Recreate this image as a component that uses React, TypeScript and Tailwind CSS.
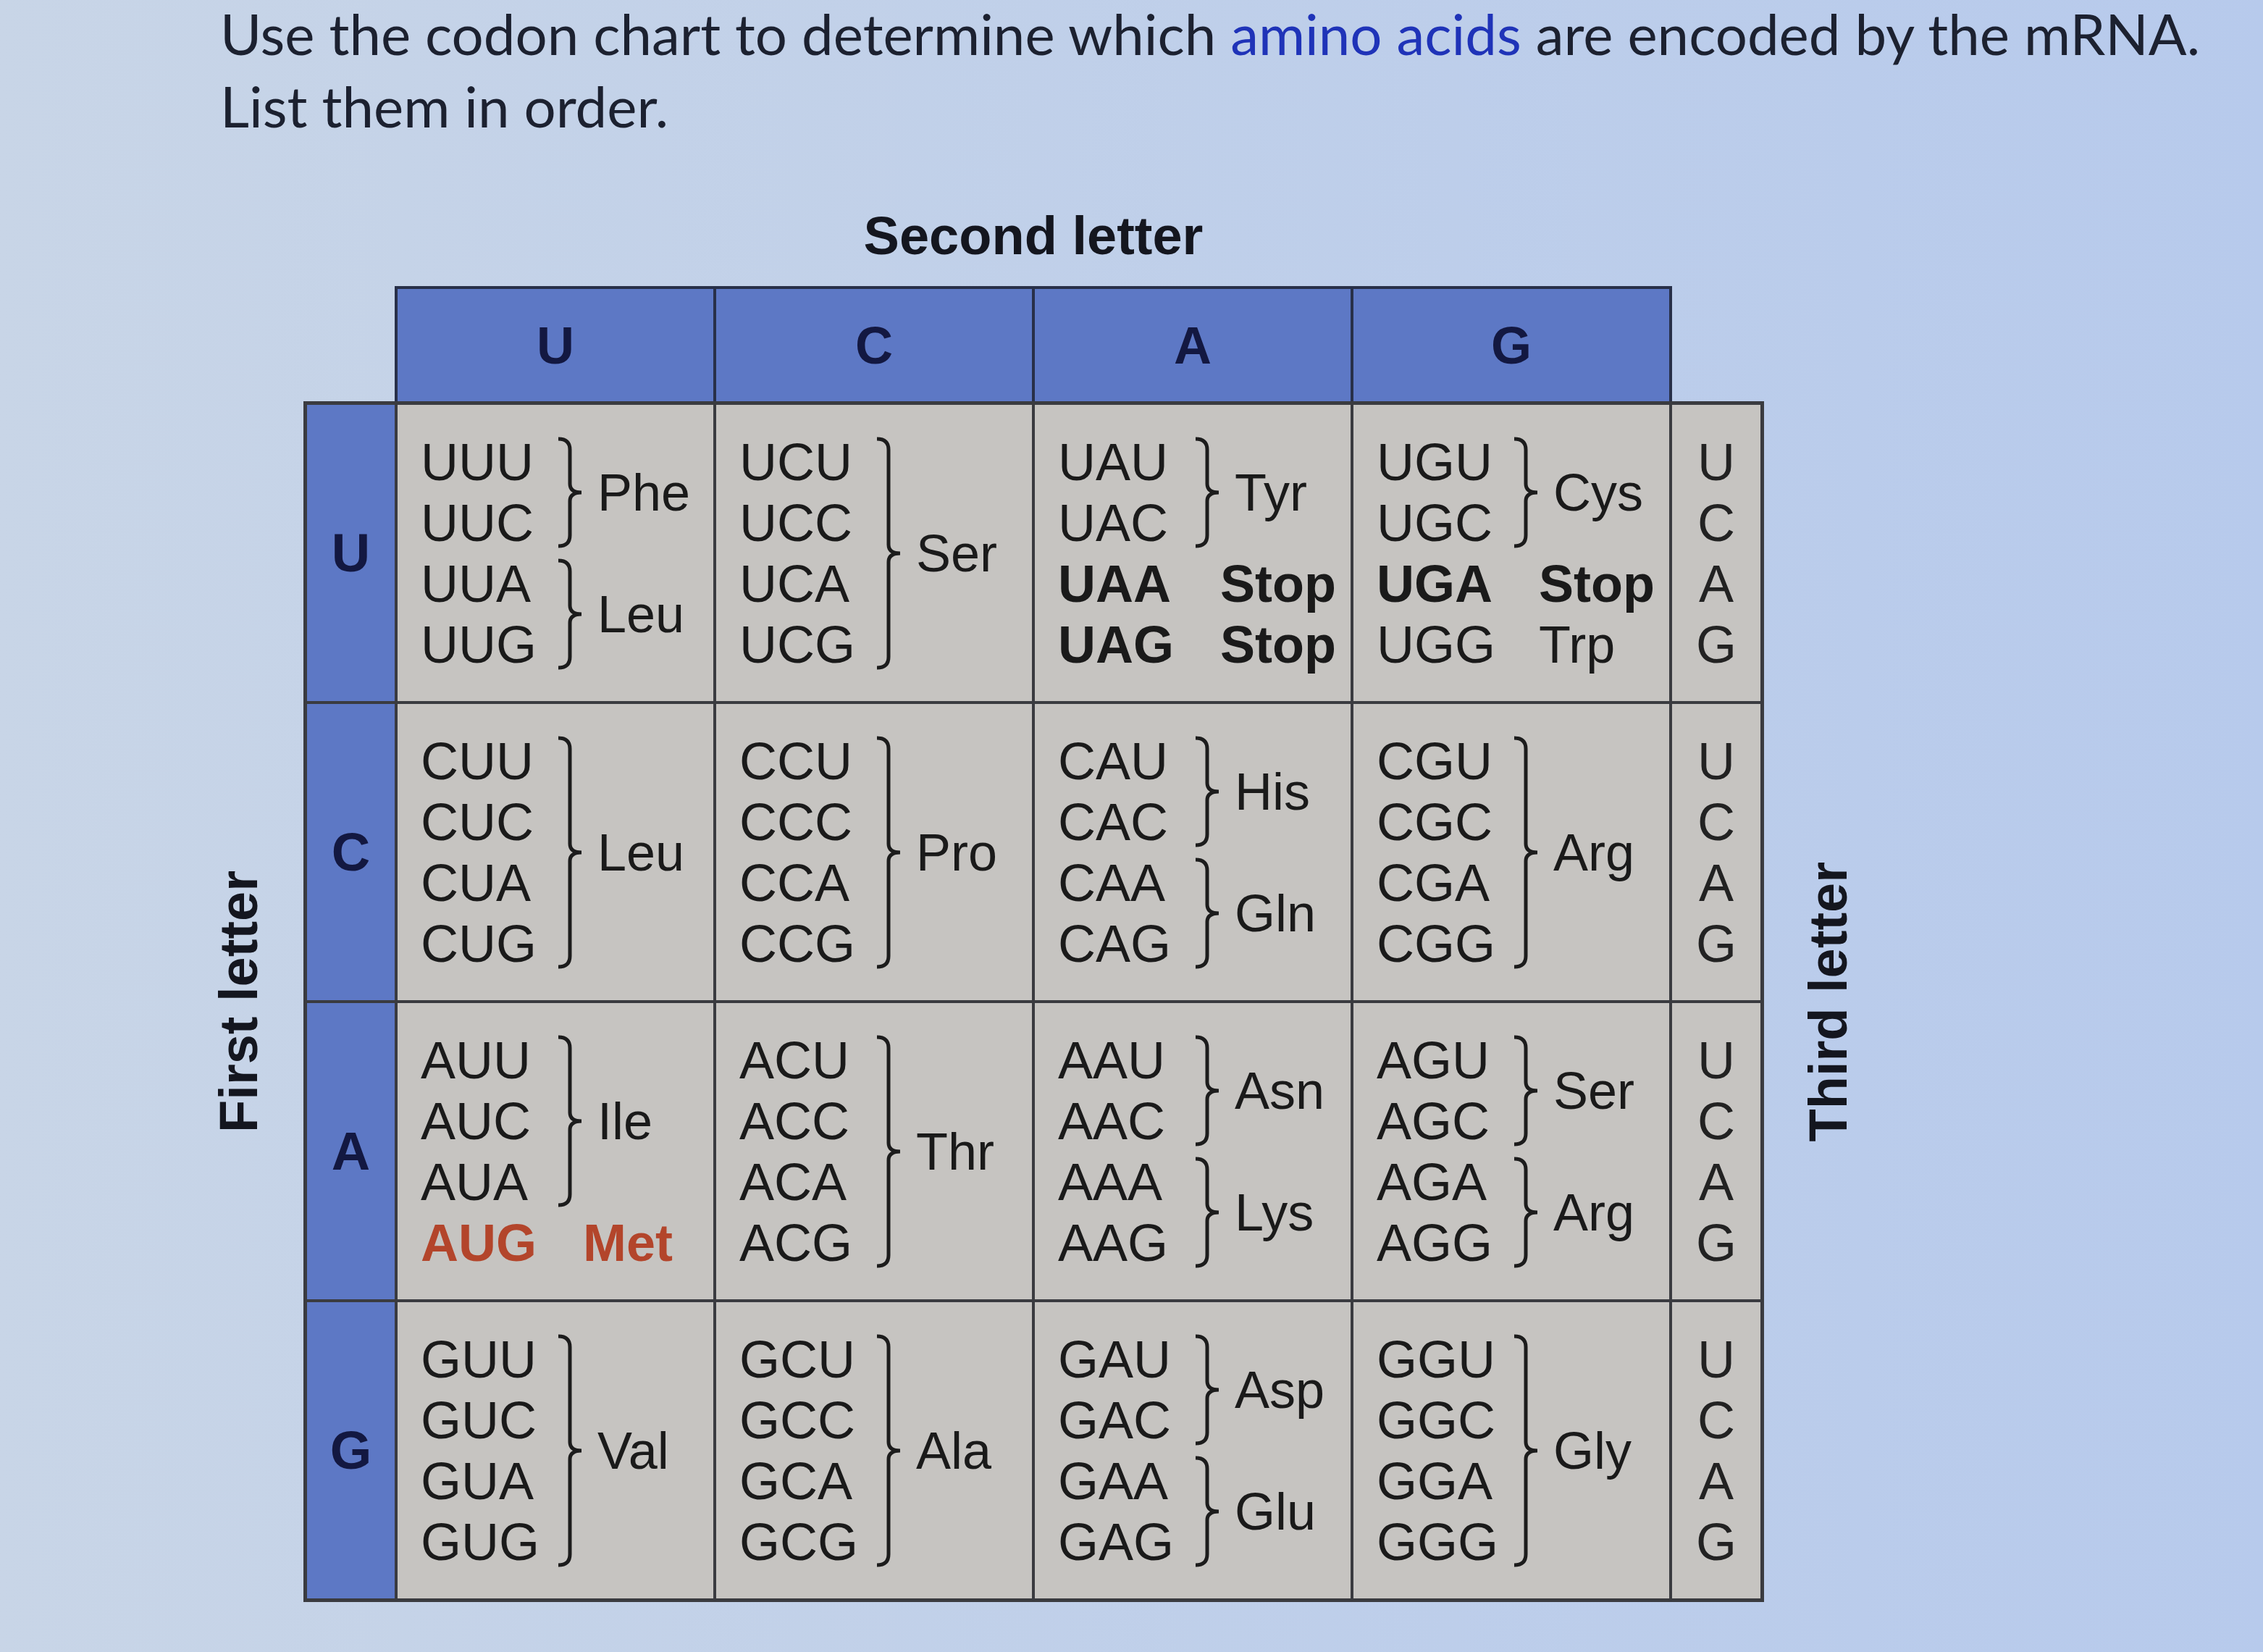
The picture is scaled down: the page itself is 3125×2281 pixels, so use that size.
import React from "react";

type Item = { codons: string[]; aa: string; kind?: "stop" | "met" };

const rows: { first: string; cells: Item[][] }[] = [
  {
    first: "U",
    cells: [
      [
        { codons: ["UUU", "UUC"], aa: "Phe" },
        { codons: ["UUA", "UUG"], aa: "Leu" },
      ],
      [{ codons: ["UCU", "UCC", "UCA", "UCG"], aa: "Ser" }],
      [
        { codons: ["UAU", "UAC"], aa: "Tyr" },
        { codons: ["UAA"], aa: "Stop", kind: "stop" },
        { codons: ["UAG"], aa: "Stop", kind: "stop" },
      ],
      [
        { codons: ["UGU", "UGC"], aa: "Cys" },
        { codons: ["UGA"], aa: "Stop", kind: "stop" },
        { codons: ["UGG"], aa: "Trp" },
      ],
    ],
  },
  {
    first: "C",
    cells: [
      [{ codons: ["CUU", "CUC", "CUA", "CUG"], aa: "Leu" }],
      [{ codons: ["CCU", "CCC", "CCA", "CCG"], aa: "Pro" }],
      [
        { codons: ["CAU", "CAC"], aa: "His" },
        { codons: ["CAA", "CAG"], aa: "Gln" },
      ],
      [{ codons: ["CGU", "CGC", "CGA", "CGG"], aa: "Arg" }],
    ],
  },
  {
    first: "A",
    cells: [
      [
        { codons: ["AUU", "AUC", "AUA"], aa: "Ile" },
        { codons: ["AUG"], aa: "Met", kind: "met" },
      ],
      [{ codons: ["ACU", "ACC", "ACA", "ACG"], aa: "Thr" }],
      [
        { codons: ["AAU", "AAC"], aa: "Asn" },
        { codons: ["AAA", "AAG"], aa: "Lys" },
      ],
      [
        { codons: ["AGU", "AGC"], aa: "Ser" },
        { codons: ["AGA", "AGG"], aa: "Arg" },
      ],
    ],
  },
  {
    first: "G",
    cells: [
      [{ codons: ["GUU", "GUC", "GUA", "GUG"], aa: "Val" }],
      [{ codons: ["GCU", "GCC", "GCA", "GCG"], aa: "Ala" }],
      [
        { codons: ["GAU", "GAC"], aa: "Asp" },
        { codons: ["GAA", "GAG"], aa: "Glu" },
      ],
      [{ codons: ["GGU", "GGC", "GGA", "GGG"], aa: "Gly" }],
    ],
  },
];

const Brace = ({ h }: { h: number }) => {
  const m = h / 2;
  return (
    <svg width={44} height={h} className="shrink-0">
      <path
        d={`M4 3 Q20 3 20 18 L20 ${m - 12} Q20 ${m} 36 ${m} Q20 ${m} 20 ${m + 12} L20 ${h - 18} Q20 ${h - 3} 4 ${h - 3}`}
        fill="none"
        stroke="#1c1c1c"
        strokeWidth={5}
      />
    </svg>
  );
};

const Entry = ({ item }: { item: Item }) => {
  const n = item.codons.length;
  const tone =
    item.kind === "met"
      ? "font-bold text-[#b3452b]"
      : item.kind === "stop"
      ? "font-bold"
      : "";
  return (
    <div className={`flex items-center ${tone}`}>
      <div className="flex w-[186px] flex-col">
        {item.codons.map((c) => (
          <span key={c}>{c}</span>
        ))}
      </div>
      {n > 1 ? <Brace h={n * 84 - 14} /> : <div className="w-[24px]" />}
      <span className="ml-[14px]">{item.aa}</span>
    </div>
  );
};

const App = () => {
  return (
    <div className="h-[2281px] w-[3125px] overflow-hidden bg-linear-to-r from-[#c8d5e7] to-[#b7caec]">
      <div className="-mt-[4px] pl-[304px] text-[78px] leading-[100px] text-[#1c2130] [font-family:Lato,sans-serif]">
        <p>
          Use the codon chart to determine which{" "}
          <span className="text-[#1f33b8]">amino acids</span> are encoded by the mRNA.
        </p>
        <p>List them in order.</p>
      </div>

      <div className="mt-[93px] text-[72px] leading-[84px] text-[#1a1a1a] [font-family:'Liberation_Sans',Arial,sans-serif]">
        <div className="ml-[545px] w-[1764px] text-center text-[74px] font-bold leading-[74px] text-[#14161f]">
          Second letter
        </div>

        <div className="ml-[545px] mt-[32px] grid h-[159px] w-[1764px] grid-cols-4 gap-[4px] border-[4px] border-b-0 border-[#283049] bg-[#283049]">
          {["U", "C", "A", "G"].map((l) => (
            <div
              key={l}
              className="flex items-center justify-center bg-[#5d78c5] text-[72px] font-bold text-[#131841]"
            >
              {l}
            </div>
          ))}
        </div>

        <div className="flex">
          <div className="flex w-[419px] items-center justify-end pr-[52px]">
            <div className="rotate-180 text-[74px] font-bold leading-[74px] text-[#14161f] [writing-mode:vertical-rl]">
              First letter
            </div>
          </div>

          <div className="grid grid-cols-[121px_436px_436px_436px_436px_122px] grid-rows-[409px_409px_409px_409px] gap-[4px] border-[5px] border-[#3a3b40] bg-[#3a3b40]">
            {rows.map((row) => (
              <React.Fragment key={row.first}>
                <div className="flex items-center justify-center bg-[#5d78c5] text-[74px] font-bold text-[#131841]">
                  {row.first}
                </div>
                {row.cells.map((cell, i) => (
                  <div key={i} className="flex flex-col justify-center bg-[#c6c4c1] pl-[32px]">
                    {cell.map((item) => (
                      <Entry key={item.codons[0]} item={item} />
                    ))}
                  </div>
                ))}
                <div className="flex flex-col items-center justify-center bg-[#c6c4c1] text-[#222]">
                  {["U", "C", "A", "G"].map((l) => (
                    <span key={l}>{l}</span>
                  ))}
                </div>
              </React.Fragment>
            ))}
          </div>

          <div className="ml-[52px] flex items-center">
            <div className="rotate-180 text-[74px] font-bold leading-[74px] text-[#14161f] [writing-mode:vertical-rl]">
              Third letter
            </div>
          </div>
        </div>
      </div>
    </div>
  );
};

export default App;
